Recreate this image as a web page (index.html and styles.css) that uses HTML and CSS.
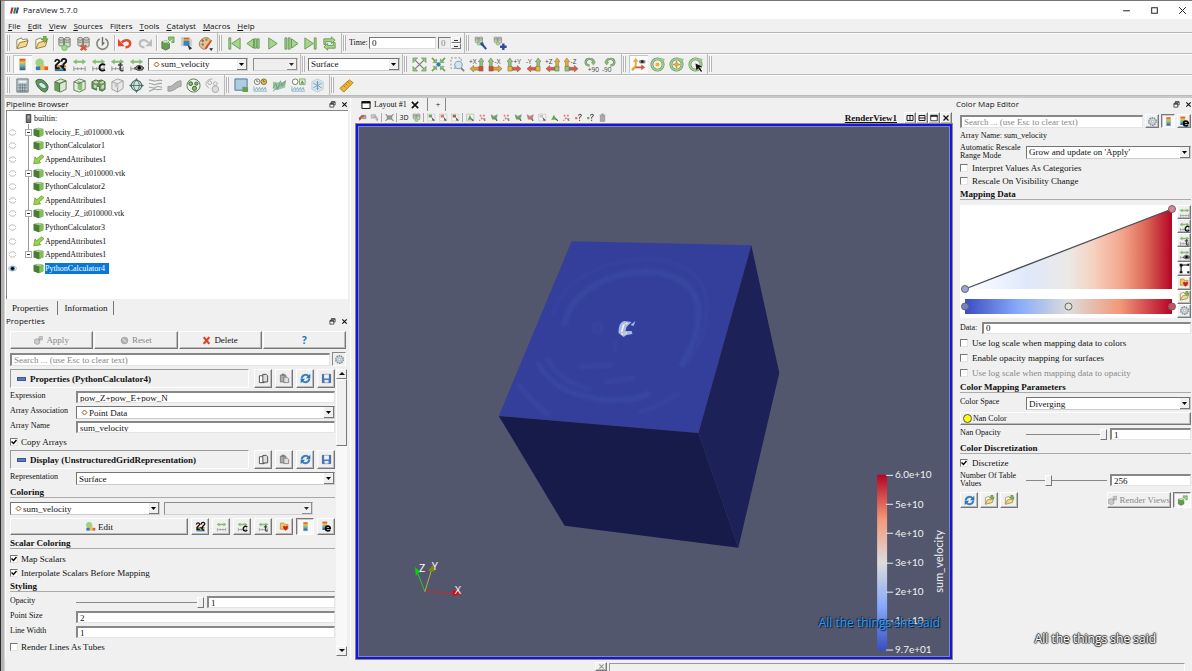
FILE: index.html
```html
<!DOCTYPE html>
<html lang="en">
<head>
<meta charset="utf-8">
<title>ParaView 5.7.0</title>
<link rel="stylesheet" href="styles.css">
</head>
<body>
<svg class="defs" aria-hidden="true">
<defs>
<linearGradient id="jet" x1="0" y1="0" x2="0" y2="1"><stop offset="0" stop-color="#d8381c"/><stop offset=".3" stop-color="#f5c330"/><stop offset=".6" stop-color="#59b8c4"/><stop offset="1" stop-color="#234fa0"/></linearGradient>
<linearGradient id="ramp"><stop offset="0" stop-color="#3b4cc0"/><stop offset=".25" stop-color="#84a9fb"/><stop offset=".5" stop-color="#dddcdc"/><stop offset=".75" stop-color="#f39878"/><stop offset="1" stop-color="#b40426"/></linearGradient>
<linearGradient id="rampV" x1="0" y1="1" x2="0" y2="0"><stop offset="0" stop-color="#3b4cc0"/><stop offset=".25" stop-color="#84a9fb"/><stop offset=".5" stop-color="#dddcdc"/><stop offset=".75" stop-color="#f39878"/><stop offset="1" stop-color="#b40426"/></linearGradient>
<linearGradient id="fade"><stop offset="0" stop-color="#fff"/><stop offset=".3" stop-color="#dfe8fb"/><stop offset=".5" stop-color="#ebe9e6"/><stop offset=".62" stop-color="#f5d2c0"/><stop offset=".76" stop-color="#f3a58b"/><stop offset=".87" stop-color="#dc6b58"/><stop offset="1" stop-color="#b40426"/></linearGradient>
<filter id="soft"><feGaussianBlur stdDeviation="1.6"/></filter>
<filter id="soft1"><feGaussianBlur stdDeviation=".7"/></filter>
</defs>
<symbol id="open" viewBox="0 0 16 16"><path d="M2 13V4l5-2 1 2 5-1v4" fill="#fffbe8" stroke="#8e8157"/><path d="M2 13.500 5 7l9-2-2 6z" fill="#f6d988" stroke="#8e7a43"/></symbol>
<symbol id="openplus" viewBox="0 0 16 16"><use href="#open"/><path d="M10 0h3v3h2l-3.500 4L8 3h2z" fill="#7ab648" stroke="#4f8230" stroke-width=".6"/></symbol>
<symbol id="srv0" viewBox="0 0 16 16"><g fill="#d3d6cc" stroke="#6f7668" stroke-width=".9"><path d="M2 3v7c0 1 5 1 5 0V3z"/><path d="M8 3v8c0 1 6 1 6 0V3z"/><ellipse cx="4.500" cy="3" rx="2.700" ry="1.500"/><ellipse cx="11" cy="3" rx="3" ry="1.500"/><path d="M2 6c1 1 4 1 5 0M8 6c1 1 5 1 6 0" fill="none"/></g></symbol>
<symbol id="srv" viewBox="0 0 16 16"><use href="#srv0"/><circle cx="8" cy="12.500" r="3" fill="#9ddb8f" stroke="#62a655" stroke-width=".7"/></symbol>
<symbol id="srvx" viewBox="0 0 16 16"><use href="#srv0"/><path d="m5 10 6 5m0-5-6 5" stroke="#cf5a40" stroke-width="2.600"/></symbol>
<symbol id="timer" viewBox="0 0 16 16"><path d="M5 3a6 6 0 1 0 6 0" fill="none" stroke="#87887f" stroke-width="1.800"/><path d="M8 1v8l2-2" fill="none" stroke="#6b6c64" stroke-width="1.500"/></symbol>
<symbol id="undo" viewBox="0 0 16 16"><path d="M4 7c3-4 9-3 9 1 0 3-3 4-5 4" fill="none" stroke="#e14b2d" stroke-width="2.600"/><path d="M0 3v8h7z" fill="#e14b2d"/></symbol>
<symbol id="redo" viewBox="0 0 16 16"><path d="M12 7C9 3 3 4 3 8c0 3 3 4 5 4" fill="none" stroke="#bcbcbc" stroke-width="2.400"/><path d="M16 3v8H9z" fill="#bcbcbc"/></symbol>
<symbol id="extract" viewBox="0 0 16 16"><path d="m2 6 5-1 3 2v6l-4 2-4-2z" fill="#669e50" stroke="#3f6d31" stroke-width=".8"/><ellipse cx="6" cy="6" rx="3" ry="1.200" fill="#cfe4bd"/><path d="M9 1h6v6h-2L9 4z" fill="#8ac46e" stroke="#598f43" stroke-width=".7"/><path d="m9 8 4-4" stroke="#fff"/></symbol>
<symbol id="state" viewBox="0 0 16 16"><path d="M2 1h9l3 3v7H2z" fill="#cdd1cc"/><path d="M5 2h6v8H5z" fill="url(#jet)"/><path d="M5 5h6v5H5z" fill="#3d7fc4"/><path d="m9 9 5 4-3 2z" fill="#333"/></symbol>
<symbol id="palette" viewBox="0 0 16 16"><path d="M2 6c3-6 11-5 11-1 0 3-3 2-3 5 0 4-4 5-6 3-3-2-3-5-2-7z" fill="#edc28a" stroke="#9a7144"/><circle cx="5" cy="5" r="1.300" fill="#b75b3a"/><circle cx="9" cy="4" r="1.300" fill="#66a05a"/><circle cx="5" cy="9" r="1.300" fill="#4e85b5"/><path d="m7 13 7-9 1 1-6 9z" fill="#cb4b30"/><path d="M12 13h4l-2 3z" fill="#222"/></symbol>
<symbol id="first" viewBox="0 0 16 16"><path class="vcr" d="M2 2h2v12H2zM14 2v12L5 8z"/></symbol>
<symbol id="prev" viewBox="0 0 16 16"><path class="vcr" d="M12 3h2v10h-2zM9 3h2v10H9zM8 3v10L1 8z"/></symbol>
<symbol id="play" viewBox="0 0 16 16"><path class="vcr" d="M4 2v12l9-6z"/></symbol>
<symbol id="next" viewBox="0 0 16 16"><path class="vcr" d="M1 2h2v12H1zM4.500 2h2v12h-2zM8 3v10l7-5z"/></symbol>
<symbol id="last" viewBox="0 0 16 16"><path class="vcr" d="M12 2h2v12h-2zM2 2v12l9-6z"/></symbol>
<symbol id="loop" viewBox="0 0 16 16"><path class="vcr" d="M2 3h8V1l4 3.500L10 8V6H4v3H2zM14 13H6v2l-4-3.500L6 8v2h6V7h2z"/></symbol>
<symbol id="wrench" viewBox="0 0 16 16"><g transform="scale(.65)"><use href="#srv" width="16" height="16"/></g><path d="m8 8 5 6" stroke="#33499b" stroke-width="2.200"/><circle cx="8.500" cy="8.500" r="1.800" fill="#33499b"/></symbol>
<symbol id="addsrv" viewBox="0 0 16 16"><g transform="scale(.65)"><use href="#srv" width="16" height="16"/></g><path d="M11 8v7M7.500 11.500h7" stroke="#33499b" stroke-width="2.600"/></symbol>
<symbol id="cmap" viewBox="0 0 16 16"><path d="M5 2h6v12H5z" fill="url(#jet)" stroke="#b58a4a" stroke-width=".4"/></symbol>
<symbol id="editcm" viewBox="0 0 16 16"><circle cx="6" cy="6" r="4.500" fill="#9bd382"/><path d="M2 10h5v4H2z" fill="#3977bd"/><path d="M7 8h4v6H7z" fill="#f1bf3a"/><path d="M11 10h4v4h-4z" fill="#d8623c"/></symbol>
<symbol id="cmQ" viewBox="0 0 16 16"><path d="M2 9h12v6H2z" fill="url(#jet)"/><path d="M2 5c1-3 4-3 5 0L3 9v3h4M9 5c0-4 6-4 5 0l-3 3v3M8 9l5 5" fill="none" stroke="#151515" stroke-width="2"/></symbol>
<symbol id="rng" viewBox="0 0 16 16"><path d="M1 5l4-3v2h6V2l4 3-4 3V6H5v2z" fill="#85bd73"/><path d="M2 10v5m12-5v5M2 12.500h12M6 11v3m4-3v3" fill="none" stroke="#909090"/></symbol>
<symbol id="rngc" viewBox="0 0 16 16"><use href="#rng"/><path d="M15 8.500c-3-2-6 0-6 3s3 4 6 2" fill="none" stroke="#111" stroke-width="2"/></symbol>
<symbol id="rngt" viewBox="0 0 16 16"><use href="#rng"/><path d="M11 6v7c0 2 2 2 3 1M8.500 8.500h5" fill="none" stroke="#444" stroke-width="1.800"/></symbol>
<symbol id="rngeye" viewBox="0 0 16 16"><use href="#rng"/><path d="M6 12c3-4 7-4 10 0-3 3-7 3-10 0z" fill="#888" stroke="#333"/><circle cx="11" cy="11.500" r="1.800" fill="#000"/></symbol>
<symbol id="outarr" viewBox="0 0 16 16"><path d="m3 3 10 10M13 3 3 13" stroke="#777b72" stroke-width="1.200"/><path d="M1 1h5L1 6zM15 1v5l-5-5zM1 15v-5l5 5zM15 15h-5l5-5z" fill="#94c680" stroke="#5e8751" stroke-width=".6"/></symbol>
<symbol id="inarr" viewBox="0 0 16 16"><path d="m1 1 4 4M15 1l-4 4M1 15l4-4M15 15l-4-4" stroke="#71a860" stroke-width="1.800"/><path d="M6 2v4H2zM10 2v4h4zM6 14v-4H2zM10 14v-4h4z" fill="#88bd74" stroke="#5e8751" stroke-width=".5"/><circle cx="8" cy="8" r="2.300" fill="#2184ad"/></symbol>
<symbol id="zbox" viewBox="0 0 16 16"><path d="M1 1h11v11H1z" fill="none" stroke="#888" stroke-dasharray="2 2"/><circle cx="9" cy="8.500" r="4" fill="#cfe6f4" stroke="#8ea3b0" stroke-width="1.200"/><path d="m12 12 3 3" stroke="#7e878c" stroke-width="2"/></symbol>
<symbol id="axr" viewBox="0 0 16 16"><g class="edge"><path d="M3 1l3 4H4.500v7h-3V5H0z" fill="var(--v)"/><path d="M5 11h6V9l4 3.500-4 3.500v-2H5z" fill="var(--h)"/><path d="M1 10h4.500v5H1z" fill="var(--c)"/></g></symbol>
<symbol id="axl" viewBox="0 0 16 16"><g class="edge"><path d="M13 1l3 4h-1.500v7h-3V5H10z" fill="var(--v)"/><path d="M11 11H5V9l-4 3.500L5 16v-2h6z" fill="var(--h)"/><path d="M10.500 10H15v5h-4.500z" fill="var(--c)"/></g></symbol>
<symbol id="rotp" viewBox="0 0 16 16"><path d="M7 9C1 9 2 2 7 2c4 0 5 3 4 5" fill="none" stroke="#708e64" stroke-width="2.600"/><path d="M7 9C1 9 2 2 7 2c4 0 5 3 4 5" fill="none" stroke="#a3cf8f"/><path d="M8 5h6l-3 4z" fill="#87b775"/></symbol>
<symbol id="rotm" viewBox="0 0 16 16"><path d="M9 9c6 0 5-7 0-7-4 0-5 3-4 5" fill="none" stroke="#708e64" stroke-width="2.600"/><path d="M9 9c6 0 5-7 0-7-4 0-5 3-4 5" fill="none" stroke="#a3cf8f"/><path d="M8 5H2l3 4z" fill="#87b775"/></symbol>
<symbol id="axshow" viewBox="0 0 16 16"><path d="M5 1l3 4H6v6l-4 4-2-2 4-4V5H2z" fill="#d8af35"/><path d="M5 10h6V8l4 3-4 3v-2H5z" fill="#d0563e"/><ellipse cx="12" cy="5" rx="3.500" ry="2" fill="#888"/><circle cx="12" cy="5" r="1.500" fill="#222"/></symbol>
<symbol id="ring" viewBox="0 0 16 16"><circle cx="8" cy="8" r="6" fill="none" stroke="#678c58" stroke-width="3"/><circle cx="8" cy="8" r="6" fill="none" stroke="#a3cf8f" stroke-width="1.800"/><path d="m11 1 5 1-3 5z" fill="#9ac785"/></symbol>
<symbol id="ring1" viewBox="0 0 16 16"><use href="#ring"/><circle cx="8" cy="8" r="2.200" fill="#e5b72b"/></symbol>
<symbol id="ring2" viewBox="0 0 16 16"><use href="#ring"/><path d="m8 4 1 3 3 1-3 1-1 3-1-3-3-1 3-1z" fill="#e5b72b" stroke="#977a27" stroke-width=".5"/></symbol>
<symbol id="ring3" viewBox="0 0 16 16"><use href="#ring"/><path d="m8 7 7 3-3 1 3 4-1 1-3-4-2 2z" fill="#111"/></symbol>
<symbol id="calc" viewBox="0 0 16 16"><path d="M2 1h12v14H2z" fill="#bfcbd0" stroke="#66757b"/><path d="M4 3h8v2H4z" fill="#eef3f3"/><path d="M3 7.500h10M3 10.500h10M3 13.500h10M5.500 6v9M8 6v9M10.500 6v9" stroke="#6d7c83" stroke-width=".9"/></symbol>
<symbol id="contour" viewBox="0 0 16 16"><path d="M2 3c4-4 11 0 13 6 0 4-2 6-4 6-5-2-9-7-9-12z" fill="#659758" stroke="#3a6233"/><ellipse cx="9" cy="8" rx="4.500" ry="2.500" transform="rotate(35 9 8)" fill="#d6e9e2" stroke="#407a74"/></symbol>
<symbol id="cube" viewBox="0 0 16 16"><path d="m1 3 7-2 7 2v9l-7 3-7-3z" fill="#5c8f42"/><path d="m1 3 7-2 7 2-6 2z" fill="#a7cf8b"/><path d="m9 5 6-2v9l-6 3z" fill="#7fc05c"/><path d="m1 3 8 2v10l-8-3z" fill="#4c7a3a"/></symbol>
<symbol id="clip" viewBox="0 0 16 16"><path d="m2 4 6-3 6 2v9l-6 3-6-2z" fill="#dbe8d5" stroke="#5d8153"/><path d="m2 4 5 2v9l-5-2z" fill="#6b9c5a"/><path d="m2 4 5 2 7-3M7 6v9" fill="none" stroke="#55784b" stroke-width="1.200"/></symbol>
<symbol id="slice" viewBox="0 0 16 16"><path d="m2 4 6-3 6 2v9l-6 3-6-2z" fill="#e5eee1" stroke="#5d8153"/><path d="m6 3 5 2v9l-5-2z" fill="#8dbb7b"/><path d="m2 4 5 2 7-3" fill="none" stroke="#55784b"/></symbol>
<symbol id="thresh" viewBox="0 0 16 16"><path d="m1 4 4-2 3 1 3-1 4 2v8l-3 2-3-1V9H6v4l-5-2z" fill="#6a9459" stroke="#4f7046"/><path d="m2 4 4-1 2 2-3 1zM9 5l4-2 1 2-3 1zM3 7l3 1v3l-3-1zM11 8l3-1v4l-3 1z" fill="#c6ddb8"/></symbol>
<symbol id="subset" viewBox="0 0 16 16"><path d="m2 4 6-3 6 2v8l-6 4-6-3zM2 4l6 2 6-3M8 6v9" fill="#e7e7e7" stroke="#a0a0a0"/><path d="m5 6 4 1v4L5 9z" fill="#c5c5c5"/></symbol>
<symbol id="glyph" viewBox="0 0 16 16"><circle cx="8" cy="8" r="5.500" fill="#d3e3db" stroke="#51756c" stroke-width="1.200"/><path d="M8 2c-4 4-4 8 0 12 4-4 4-8 0-12M2 8h12" fill="none" stroke="#51756c"/><path d="M8 0l2 3H6zM8 16l2-3H6zM0 8l3-2v4zM16 8l-3-2v4z" fill="#42706a"/></symbol>
<symbol id="stream" viewBox="0 0 16 16"><path d="M1 2c4 0 4 2 8 1s4-1 6 0M1 6c4-1 4 2 7 1s4-2 7-1M1 10c4-1 4 2 7 0s4-1 7 0M1 14c3 0 4-3 7-2s4 0 7 0" fill="none" stroke="#a1a6a2" stroke-width="1.200"/></symbol>
<symbol id="warp" viewBox="0 0 16 16"><path d="M1 9c6 1 7-6 14-6v6c-5 0-7 6-14 5z" fill="#b4b4b4" stroke="#9b9b9b"/></symbol>
<symbol id="group" viewBox="0 0 16 16"><circle cx="8" cy="8" r="7" fill="#eaf3e6" stroke="#55784b"/><circle cx="5" cy="6" r="2" fill="#89b977" stroke="#3e6135"/><circle cx="11" cy="6" r="1.700" fill="#89b977" stroke="#3e6135"/><circle cx="9" cy="11" r="2.200" fill="#89b977" stroke="#3e6135"/></symbol>
<symbol id="level" viewBox="0 0 16 16"><path d="M8 1C3 1 1 4 1 7l3 4" fill="none" stroke="#aaa"/><circle cx="5" cy="5" r="2" fill="#eee" stroke="#aaa"/><circle cx="11" cy="6" r="2" fill="#eee" stroke="#aaa"/><circle cx="11" cy="12" r="3.500" fill="#ddd" stroke="#aaa"/></symbol>
<symbol id="sel" viewBox="0 0 16 16"><path d="M1 1h13v12H1z" fill="#aecde0" stroke="#3f789e"/><path d="m9 9 6 1v5H9z" fill="#61a44c"/></symbol>
<symbol id="plot" viewBox="0 0 16 16"><circle cx="4.500" cy="4" r="3" fill="#fff" stroke="#6c7a5c"/><circle cx="11.500" cy="4" r="3" fill="#e7c34b" stroke="#7c6a3a"/><path d="M4 2v2h2M11 2v2h2" fill="none" stroke="#5a5a4a" stroke-width=".8"/><path d="M1 9v5h14M2 13l2-3 1 3 2-3 1 3 2-3 1 3 2-3 1 3" fill="none" stroke="#7ba8c4" stroke-width=".9"/></symbol>
<symbol id="plotline" viewBox="0 0 16 16"><path d="m1 4 9 1 5-3-1 8-9 3-4-2z" fill="#9fc39a"/><path d="m1 11 3-5 2 6 3-9 2 6 3-4M1 14 15 3" fill="none" stroke="#6a9f9a"/></symbol>
<symbol id="plot3" viewBox="0 0 16 16"><circle cx="4.500" cy="4" r="3" fill="#fff" stroke="#6c7a5c"/><path d="M9 1h6v6H9z" fill="#dcefd5" stroke="#85a97a"/><path d="m10 6 2-4 2 4z" fill="#67a255"/><path d="M1 9v5h14M2 13l2-3 1 3 2-3 1 3 2-3 1 3 2-3 1 3" fill="none" stroke="#7ba8c4" stroke-width=".9"/></symbol>
<symbol id="snow" viewBox="0 0 16 16"><path d="m2 4 6-3 6 3v8l-6 3-6-3z" fill="#dce7ee" stroke="#c2ccd3"/><path d="M8 3v10M3.500 5.500l9 5M12.500 5.500l-9 5" fill="none" stroke="#6ba0be"/><path d="M6 4l2 2 2-2M6 12l2-2 2 2" fill="none" stroke="#6ba0be" stroke-width=".7"/></symbol>
<symbol id="ruler" viewBox="0 0 16 16"><path d="m1 11 10-9 4 3L5 15z" fill="#eeb72d" stroke="#a7791f"/><path d="m5 8 2 2m0-4 2 2m0-4 2 2" stroke="#8d651c" stroke-width=".8"/></symbol>
<symbol id="gear" viewBox="0 0 16 16"><circle cx="8" cy="8" r="5.500" fill="#e6ecef" stroke="#7f9099" stroke-width="2" stroke-dasharray="2.300 1.100"/><circle cx="8" cy="8" r="4.200" fill="none" stroke="#8a99a1" stroke-width=".9"/><circle cx="8" cy="8" r="1.800" fill="#fff" stroke="#7f9099"/></symbol>
<symbol id="copy" viewBox="0 0 16 16"><path d="M2 4h5l2 2v8H2z" fill="#fff" stroke="#444" stroke-width="1.300"/><path d="M7 2h5l2 2v9H7z" fill="#ddd" stroke="#444" stroke-width="1.300"/></symbol>
<symbol id="paste" viewBox="0 0 16 16"><path d="M2 3h8v10H2z" fill="#aaa" stroke="#666"/><path d="M4 1h4v3H4z" fill="#777"/><path d="M7 6h5l2 2v6H7z" fill="#ddd" stroke="#666"/></symbol>
<symbol id="refresh" viewBox="0 0 16 16"><path d="M2.500 8C3 2 10 1 12.500 5M13.500 8C13 14 6 15 3.500 11" fill="none" stroke="#3d82c0" stroke-width="3"/><path d="M15 1v6.500H8.500zM1 15V8.500h6.500z" fill="#2d72b3"/></symbol>
<symbol id="save" viewBox="0 0 16 16"><path d="M2 2h12v12H2z" fill="#4777b4" stroke="#2f5487"/><path d="M4.500 2h7v6h-7z" fill="#edf3f9"/><path d="M5 10h6v4H5z" fill="#dfe6ee"/></symbol>
<symbol id="heart" viewBox="0 0 16 16"><path d="M2 3h5l1 2h5v7H2z" fill="#f2c85e" stroke="#af8b36"/><path d="M9.500 14C3 9 7 5 9.500 8c2.500-3 6.500 1 0 6z" fill="#cf2024"/></symbol>
<symbol id="cme" viewBox="0 0 16 16"><path d="M2 1h7v12H2z" fill="url(#jet)"/><path d="M6.500 11h7c0-5-7-5-7 0 0 4 4 4 7 2.500" fill="none" stroke="#000" stroke-width="2.200"/></symbol>
<symbol id="apply" viewBox="0 0 16 16"><path d="m1 6 5-1 4 1v7l-4 2-5-2z" fill="#ccc" stroke="#8d8d8d"/><path d="M9 1h6v6H9z" fill="#ccc" stroke="#999"/><path d="m8 8 4-4" stroke="#777"/></symbol>
<symbol id="reset" viewBox="0 0 16 16"><circle cx="8" cy="8" r="6" fill="#b3b3b3" stroke="#929292"/><path d="m5 5 6 6" stroke="#ddd" stroke-width="2"/></symbol>
<symbol id="del" viewBox="0 0 16 16"><path d="m3 2 10 12M13 2 3 14" stroke="#dd432b" stroke-width="4"/></symbol>
<symbol id="arrow" viewBox="0 0 16 16"><path d="m13 1 3 3-7 6 2 3-10 1L3 4l2 3z" fill="#9bd34a" stroke="#5c9026"/></symbol>
<symbol id="eyeoff" viewBox="0 0 16 16"><path d="M2 7c2-5 10-5 12 0M2 9c2 5 10 5 12 0" fill="none" stroke="#aaa" stroke-width="1.500"/></symbol>
<symbol id="eyeon" viewBox="0 0 16 16"><path d="M0 8c3-6 13-6 16 0-3 6-13 6-16 0z" fill="#d6e7ef" stroke="#999"/><circle cx="8" cy="8" r="4" fill="#1f6f9c"/><circle cx="8" cy="8" r="2.400" fill="#000"/></symbol>
<symbol id="server" viewBox="0 0 16 16"><path d="M4 1h8v14H4z" fill="#777" stroke="#222" stroke-width="1.400"/><path d="M6 4h4M6 7h4" stroke="#ddd" stroke-width="1.300"/></symbol>
<symbol id="curve" viewBox="0 0 16 16"><path d="M1 1h14v14H1z" fill="#fff"/><path d="M3 14V6c0-2 1-3 3-3h8" fill="none" stroke="#000" stroke-width="1.600"/><path d="M1 1h4v4H1zM1 12h4v3H1zM12 1h3v3h-3zM12 12h3v3h-3z" fill="#111"/></symbol>
<symbol id="dock" viewBox="0 0 16 16"><path d="M5 5V2h9v7h-3M2 6h9v8H2z" fill="none" stroke="#222" stroke-width="1.600"/><path d="M5 2.500h9M2 7h9" stroke="#222" stroke-width="2.400"/></symbol>
<symbol id="x" viewBox="0 0 16 16"><path d="m3 3 10 10M13 3 3 13" stroke="#111" stroke-width="2.600"/></symbol>
<symbol id="min" viewBox="0 0 16 16"><path d="M2 8.500h12" stroke="#222" stroke-width="1.800"/></symbol>
<symbol id="max" viewBox="0 0 16 16"><path d="M3 3h10v10H3z" fill="none" stroke="#222" stroke-width="1.800"/></symbol>
<symbol id="xthin" viewBox="0 0 16 16"><path d="m2 2 12 12M14 2 2 14" stroke="#222" stroke-width="1.700"/></symbol>
<symbol id="splitv" viewBox="0 0 16 16"><path d="M2 3h12v10H2zM8 3v10" fill="none" stroke="#111" stroke-width="1.900"/></symbol>
<symbol id="splith" viewBox="0 0 16 16"><path d="M2 3h12v10H2zM2 8h12" fill="none" stroke="#111" stroke-width="1.900"/></symbol>
<symbol id="win" viewBox="0 0 16 16"><path d="M1.500 2.500h13v11h-13z" fill="#fff" stroke="#111" stroke-width="1.600"/><path d="M1 4h14" stroke="#111" stroke-width="3"/></symbol>
<symbol id="camundo" viewBox="0 0 16 16"><path d="M6 4h8v6H6z" fill="#b3a79f" stroke="#777"/><path d="M3 12c0-5 3-7 8-6" fill="none" stroke="#c94b38" stroke-width="2.400"/><path d="M1 8h6l-4 6z" fill="#a5584b"/></symbol>
<symbol id="camredo" viewBox="0 0 16 16"><path d="M2 3h8v6H2z" fill="#ccc" stroke="#999"/><path d="M6 7c5-2 7 1 7 5" fill="none" stroke="#aaa" stroke-width="2.200"/><path d="M9 10h6l-2 5z" fill="#aaa"/></symbol>
<symbol id="cam" viewBox="0 0 16 16"><path d="M4 5h8v6H4z" fill="#91a889" stroke="#666"/><path d="M1 2l3 3m11-3-3 3M1 14l3-3m11 3-3-3" stroke="#888" stroke-width="1.800"/></symbol>
<symbol id="ssel" viewBox="0 0 16 16"><path d="M1 2h13v12H1z" fill="#f3f3f3" stroke="#aaa" stroke-dasharray="2 1"/><path d="M3 3h6v5H3z" fill="var(--c)"/><path d="m8 7 6 6-4 1z" fill="#555"/></symbol>
<symbol id="tsel" viewBox="0 0 16 16"><path d="M1 2h13v12H1z" fill="none" stroke="#aaa"/><path d="m7 3 4 9H3z" fill="var(--c)"/><path d="m9 9 5 4-3 1z" fill="#555"/></symbol>
<symbol id="psel" viewBox="0 0 16 16"><path d="M3 3h3v3H3zM9 3h3v3H9zM5 8h3v3H5zM11 9h2v2h-2zM2 12h2v2H2z" fill="var(--c)"/><path d="m8 8 6 5-3 1z" fill="#777"/></symbol>
<symbol id="poly" viewBox="0 0 16 16"><path d="m2 3 5 3 6-3-2 8H4z" fill="var(--c)" stroke="#888"/><path d="m9 9 5 4-3 1z" fill="#555"/></symbol>
<symbol id="tri" viewBox="0 0 16 16"><path d="m7 3 5 9H2z" fill="var(--c)"/><path d="m10 10 4 4" stroke="#555" stroke-width="2"/></symbol>
<symbol id="ask" viewBox="0 0 16 16"><path d="M8 5c0-4 6-3 5 0l-3 3v2M10 12v2" fill="none" stroke="#555" stroke-width="1.800"/><path d="M2 7h4v4H2z" fill="var(--c)"/></symbol>
<symbol id="trash" viewBox="0 0 16 16"><path d="M4 5h8v10H4z" fill="#aaa" stroke="#888"/><path d="M3 3h10v2H3zM6 1h4v2H6z" fill="#999"/></symbol>
</svg>

<div class="window">
<header class="titlebar">
  <svg class="logo" viewBox="0 0 18 14"><path d="M3 1h4L4 13H0z" fill="#c8202f"/><path d="M9 1h4l-3 12H6z" fill="#258a42"/><path d="M14 1h4l-3 12h-4z" fill="#234a9b"/></svg>
  <h1>ParaView 5.7.0</h1>
  <div class="winctl"><button aria-label="Minimize"><svg><use href="#min"/></svg></button><button aria-label="Maximize"><svg><use href="#max"/></svg></button><button aria-label="Close"><svg><use href="#xthin"/></svg></button></div>
</header>
<nav class="menubar">
  <button><u>F</u>ile</button><button><u>E</u>dit</button><button><u>V</u>iew</button><button><u>S</u>ources</button><button>Fi<u>l</u>ters</button><button><u>T</u>ools</button><button><u>C</u>atalyst</button><button><u>M</u>acros</button><button><u>H</u>elp</button>
</nav>

<div class="toolbar">
  <div class="group">
    <button aria-label="Open"><svg><use href="#open"/></svg></button><button aria-label="Load state"><svg><use href="#openplus"/></svg></button><i class="sep"></i>
    <button aria-label="Connect"><svg><use href="#srv"/></svg></button><button aria-label="Disconnect"><svg><use href="#srvx"/></svg></button><button aria-label="Timer"><svg><use href="#timer"/></svg></button><i class="sep"></i>
    <button aria-label="Undo"><svg><use href="#undo"/></svg></button><button aria-label="Redo"><svg><use href="#redo"/></svg></button><i class="sep"></i>
    <button aria-label="Auto apply"><svg><use href="#extract"/></svg></button><button aria-label="Find data"><svg><use href="#state"/></svg></button><button aria-label="Palette"><svg><use href="#palette"/></svg></button>
  </div>
  <div class="group">
    <button aria-label="First"><svg><use href="#first"/></svg></button><button aria-label="Previous"><svg><use href="#prev"/></svg></button><button aria-label="Play"><svg><use href="#play"/></svg></button><button aria-label="Next"><svg><use href="#next"/></svg></button><button aria-label="Last"><svg><use href="#last"/></svg></button><button aria-label="Loop"><svg><use href="#loop"/></svg></button>
  </div>
  <div class="group">
    <label class="timelabel" for="time">Time:</label><input id="time" class="time" value="0"><input class="spin" type="text" value="0" aria-label="Time step" disabled><span class="spinner"><i></i><i></i></span>
  </div>
  <div class="group">
    <button aria-label="Server tools"><svg><use href="#wrench"/></svg></button><button aria-label="Add server"><svg><use href="#addsrv"/></svg></button>
  </div>
</div>
<div class="toolbar">
  <div class="group">
    <button class="on" aria-label="Color legend"><svg><use href="#cmap"/></svg></button><button aria-label="Edit color map"><svg><use href="#editcm"/></svg></button><button aria-label="Separate color map"><svg><use href="#cmQ"/></svg></button><button aria-label="Rescale to data"><svg><use href="#rng"/></svg></button><button aria-label="Rescale custom"><svg><use href="#rngc"/></svg></button><button aria-label="Rescale temporal"><svg><use href="#rngt"/></svg></button><button aria-label="Rescale visible"><svg><use href="#rngeye"/></svg></button>
    <select class="combo array w-array" aria-label="Array"><option>sum_velocity</option></select><select class="combo w-comp" aria-label="Component" disabled><option></option></select>
  </div>
  <div class="group">
    <select class="combo w-repr" aria-label="Representation"><option>Surface</option></select>
  </div>
  <div class="group">
    <button aria-label="Reset camera"><svg><use href="#outarr"/></svg></button><button aria-label="Zoom to data"><svg><use href="#inarr"/></svg></button><button aria-label="Zoom to box"><svg><use href="#zbox"/></svg></button>
    <button class="xp" aria-label="Plus X"><svg viewBox="0 0 16 16"><use href="#axl"/><text x="0" y="7" class="mini">+X</text></svg></button>
    <button class="xm" aria-label="Minus X"><svg viewBox="0 0 16 16"><use href="#axr"/><text x="7" y="7" class="mini">-X</text></svg></button>
    <button class="yp" aria-label="Plus Y"><svg viewBox="0 0 16 16"><use href="#axr"/><text x="7" y="7" class="mini">+Y</text></svg></button>
    <button class="ym" aria-label="Minus Y"><svg viewBox="0 0 16 16"><use href="#axl"/><text x="0" y="7" class="mini">-Y</text></svg></button>
    <button class="zp" aria-label="Plus Z"><svg viewBox="0 0 16 16"><use href="#axl"/><text x="0" y="7" class="mini">+Z</text></svg></button>
    <button class="zm" aria-label="Minus Z"><svg viewBox="0 0 16 16"><use href="#axr"/><text x="7" y="7" class="mini">-Z</text></svg></button>
    <button aria-label="Rotate clockwise"><svg viewBox="0 0 16 16"><use href="#rotp"/><text x="5" y="16" class="mini">+90</text></svg></button><button aria-label="Rotate counterclockwise"><svg viewBox="0 0 16 16"><use href="#rotm"/><text x="0" y="16" class="mini">-90</text></svg></button>
  </div>
  <div class="group">
    <button class="on" aria-label="Show axes"><svg><use href="#axshow"/></svg></button><button aria-label="Show center"><svg><use href="#ring1"/></svg></button><button aria-label="Reset center"><svg><use href="#ring2"/></svg></button><button aria-label="Pick center"><svg><use href="#ring3"/></svg></button>
  </div>
  <div class="group"></div>
</div>
<div class="toolbar">
  <div class="group">
    <button aria-label="Calculator"><svg><use href="#calc"/></svg></button><button aria-label="Contour"><svg><use href="#contour"/></svg></button><button aria-label="Clip"><svg><use href="#clip"/></svg></button><button aria-label="Slice"><svg><use href="#slice"/></svg></button><button aria-label="Threshold"><svg><use href="#thresh"/></svg></button><button aria-label="Extract subset"><svg><use href="#subset"/></svg></button><button aria-label="Glyph"><svg><use href="#glyph"/></svg></button><button aria-label="Stream tracer"><svg><use href="#stream"/></svg></button><button aria-label="Warp"><svg><use href="#warp"/></svg></button><button aria-label="Group datasets"><svg><use href="#group"/></svg></button><button aria-label="Extract level"><svg><use href="#level"/></svg></button>
  </div>
  <div class="group">
    <button aria-label="Extract selection"><svg><use href="#sel"/></svg></button><button aria-label="Plot over time"><svg><use href="#plot"/></svg></button><button aria-label="Plot over line"><svg><use href="#plotline"/></svg></button><button aria-label="Plot selection"><svg><use href="#plot3"/></svg></button><button aria-label="Probe"><svg><use href="#snow"/></svg></button>
  </div>
  <div class="group">
    <button aria-label="Ruler"><svg><use href="#ruler"/></svg></button>
  </div>
</div>

<main class="work">
<aside class="left">
  <section class="browser">
    <h2 class="docktitle">Pipeline Browser<span><svg><use href="#dock"/></svg><svg><use href="#x"/></svg></span></h2>
    <ul class="tree">
      <li class="root"><svg class="ico"><use href="#server"/></svg><span>builtin:</span></li>
      <li class="node"><svg class="eye"><use href="#eyeoff"/></svg><b></b><svg class="ico"><use href="#cube"/></svg><span>velocity_E_it010000.vtk</span></li>
      <li><svg class="eye"><use href="#eyeoff"/></svg><svg class="ico"><use href="#cube"/></svg><span>PythonCalculator1</span></li>
      <li><svg class="eye"><use href="#eyeoff"/></svg><svg class="ico"><use href="#arrow"/></svg><span>AppendAttributes1</span></li>
      <li class="node"><svg class="eye"><use href="#eyeoff"/></svg><b></b><svg class="ico"><use href="#cube"/></svg><span>velocity_N_it010000.vtk</span></li>
      <li><svg class="eye"><use href="#eyeoff"/></svg><svg class="ico"><use href="#cube"/></svg><span>PythonCalculator2</span></li>
      <li><svg class="eye"><use href="#eyeoff"/></svg><svg class="ico"><use href="#arrow"/></svg><span>AppendAttributes1</span></li>
      <li class="node"><svg class="eye"><use href="#eyeoff"/></svg><b></b><svg class="ico"><use href="#cube"/></svg><span>velocity_Z_it010000.vtk</span></li>
      <li><svg class="eye"><use href="#eyeoff"/></svg><svg class="ico"><use href="#cube"/></svg><span>PythonCalculator3</span></li>
      <li><svg class="eye"><use href="#eyeoff"/></svg><svg class="ico"><use href="#arrow"/></svg><span>AppendAttributes1</span></li>
      <li class="node"><svg class="eye"><use href="#eyeoff"/></svg><b></b><svg class="ico"><use href="#cube"/></svg><span>AppendAttributes1</span></li>
      <li class="sel"><svg class="eye"><use href="#eyeon"/></svg><svg class="ico"><use href="#cube"/></svg><span>PythonCalculator4</span></li>
    </ul>
  </section>
  <div class="tabs"><button>Properties</button><button>Information</button></div>
  <h2 class="docktitle">Properties<span><svg><use href="#dock"/></svg><svg><use href="#x"/></svg></span></h2>
  <div class="actions">
    <button class="push" disabled><svg><use href="#apply"/></svg>Apply</button><button class="push" disabled><svg><use href="#reset"/></svg>Reset</button><button class="push"><svg><use href="#del"/></svg>Delete</button><button class="push help" aria-label="Help">?</button>
  </div>
  <div class="searchrow"><input class="field" placeholder="Search ... (use Esc to clear text)" aria-label="Search properties"><button class="sq on" aria-label="Advanced"><svg><use href="#gear"/></svg></button></div>
  <div class="scroll">
    <div class="form">
      <div class="hdr"><h3><i></i>Properties (PythonCalculator4)</h3><button class="push" aria-label="Copy"><svg><use href="#copy"/></svg></button><button class="push" aria-label="Paste"><svg><use href="#paste"/></svg></button><button class="push" aria-label="Restore"><svg><use href="#refresh"/></svg></button><button class="push" aria-label="Save"><svg><use href="#save"/></svg></button></div>
      <div class="row"><label for="expr">Expression</label><input id="expr" class="field" value="pow_Z+pow_E+pow_N"></div>
      <div class="row"><label for="assoc">Array Association</label><select id="assoc" class="combo array"><option>Point Data</option></select></div>
      <div class="row"><label for="aname">Array Name</label><input id="aname" class="field" value="sum_velocity"></div>
      <label class="check"><input type="checkbox" checked>Copy Arrays</label>
      <div class="hdr"><h3><i></i>Display (UnstructuredGridRepresentation)</h3><button class="push" aria-label="Copy"><svg><use href="#copy"/></svg></button><button class="push" aria-label="Paste"><svg><use href="#paste"/></svg></button><button class="push" aria-label="Restore"><svg><use href="#refresh"/></svg></button><button class="push" aria-label="Save"><svg><use href="#save"/></svg></button></div>
      <div class="row"><label for="repr">Representation</label><select id="repr" class="combo"><option>Surface</option></select></div>
      <h4>Coloring</h4>
      <div class="pair"><select class="combo array" aria-label="Color array"><option>sum_velocity</option></select><select class="combo" aria-label="Color component" disabled><option></option></select></div>
      <div class="editrow"><button class="push edit"><svg><use href="#editcm"/></svg>Edit</button><button class="push" aria-label="Separate"><svg><use href="#cmQ"/></svg></button><button class="push" aria-label="Rescale"><svg><use href="#rng"/></svg></button><button class="push" aria-label="Rescale custom"><svg><use href="#rngc"/></svg></button><button class="push" aria-label="Rescale temporal"><svg><use href="#rngt"/></svg></button><button class="push" aria-label="Presets"><svg><use href="#heart"/></svg></button><button class="push down" aria-label="Legend"><svg><use href="#cmap"/></svg></button><button class="push" aria-label="Edit legend"><svg><use href="#cme"/></svg></button></div>
      <h4>Scalar Coloring</h4>
      <label class="check"><input type="checkbox" checked>Map Scalars</label>
      <label class="check"><input type="checkbox" checked>Interpolate Scalars Before Mapping</label>
      <h4>Styling</h4>
      <div class="row"><label for="opac">Opacity</label><span class="slide"><input id="opac" type="range" value="100"><input class="field" value="1" aria-label="Opacity value"></span></div>
      <div class="row"><label for="psize">Point Size</label><input id="psize" class="field" value="2"></div>
      <div class="row"><label for="lwidth">Line Width</label><input id="lwidth" class="field" value="1"></div>
      <label class="check"><input type="checkbox">Render Lines As Tubes</label>
      <label class="check"><input type="checkbox">Render Points As Spheres</label>
    </div>
    <div class="bar"><i class="up"></i><i class="thumb"></i><i class="dn"></i></div>
  </div>
</aside>

<section class="center">
  <div class="layouttabs"><button><svg><use href="#win"/></svg>Layout #1<svg><use href="#x"/></svg></button><button class="plus">+</button></div>
  <div class="viewbar">
    <button aria-label="Camera undo"><svg><use href="#camundo"/></svg></button><button aria-label="Camera redo"><svg><use href="#camredo"/></svg></button><i></i>
    <button aria-label="Capture"><svg><use href="#cam"/></svg></button><i></i>
    <button class="d3">3D</button><button aria-label="Adjust camera"><svg><use href="#srv"/></svg></button><i></i>
    <button class="g" aria-label="Add selection"><svg><use href="#ssel"/></svg></button><button class="r" aria-label="Subtract selection"><svg><use href="#ssel"/></svg></button><button class="m" aria-label="Toggle selection"><svg><use href="#ssel"/></svg></button><i></i>
    <button class="g" aria-label="Select cells"><svg><use href="#tsel"/></svg></button><button class="r" aria-label="Select points"><svg><use href="#psel"/></svg></button><button class="g" aria-label="Select cells through"><svg><use href="#poly"/></svg></button><button class="r" aria-label="Select points through"><svg><use href="#psel"/></svg></button><button class="g" aria-label="Polygon cells"><svg><use href="#poly"/></svg></button><button class="r" aria-label="Polygon points"><svg><use href="#poly"/></svg></button><button class="n" aria-label="Select block"><svg><use href="#ssel"/></svg></button><button class="g" aria-label="Interactive cells"><svg><use href="#tri"/></svg></button><button class="r" aria-label="Interactive points"><svg><use href="#psel"/></svg></button><button class="r" aria-label="Hover points"><svg><use href="#ask"/></svg></button><button class="g" aria-label="Hover cells"><svg><use href="#ask"/></svg></button><button aria-label="Clear"><svg><use href="#trash"/></svg></button>
    <strong>RenderView1</strong>
    <div class="viewctl"><button class="push" aria-label="Split horizontal"><svg><use href="#splitv"/></svg></button><button class="push" aria-label="Split vertical"><svg><use href="#splith"/></svg></button><button class="push" aria-label="Maximize view"><svg><use href="#win"/></svg></button><button class="push" aria-label="Close view"><svg><use href="#x"/></svg></button></div>
  </div>
  <div class="view">
    <svg viewBox="357 126 593 531" preserveAspectRatio="xMidYMid meet">
      <path d="m571 241 180 4-53 188-200-17z" fill="#343f9c"/>
      <clipPath id="top"><path d="m571 241 180 4-53 188-200-17z"/></clipPath>
      <g clip-path="url(#top)" fill="none" stroke="#4058a8" filter="url(#soft)">
        <path d="M563 326c8-35 45-55 85-54 35 1 52 20 50 46-1 18-8 34-18 48" stroke-width="6" opacity=".3"/>
        <path d="M552 315c10-35 50-57 100-56 40 2 58 25 54 58-3 22-12 38-24 50" stroke-width="2" opacity=".2"/>
        <path d="M537 362c10 20 30 36 75 38 20 0 30-3 37-7" stroke-width="5" opacity=".35"/>
        <path d="M546 358c10 18 24 27 45 32M578 367l34-2M604 382l30-4M517 383c10 15 20 22 32 33" stroke-width="5" opacity=".25"/>
        <path d="M638 412c17-4 30-11 42-20M615 341v12" stroke-width="3" opacity=".25"/>
        <ellipse cx="597" cy="328" rx="4" ry="5" stroke-width="3" opacity=".2"/>
      </g>
      <path d="M618 333c0-6 1-11 6-12l7 1-5 5-1 4 6 0 1 3-6 1-3 2z" fill="#9dbdec" filter="url(#soft1)"/><path d="m630 325 5-4-2 5z" fill="#9dbdec"/>
      <path d="m621 332 2-7 4-2M621 334l5-1" stroke="#fff0dd" stroke-width="1.600" fill="none" filter="url(#soft1)"/><path d="m624 325 2-1m-4 10 3-1" stroke="#efaa7c" stroke-width="1.300"/>
      <path d="m498 416 200 17 40 115-174-22z" fill="#161b4a"/>
      <path d="m751 245 28 128-41 175-40-115z" fill="#1c2257"/>
      <path d="m424 592 30 1" stroke="#d22626"/><path d="m452 590 9 4-9 2z" fill="#f00000"/>
      <path d="m424 592-7-18" stroke="#2ac32a"/><path d="m414 567 5 5-4 4z" fill="#00d800"/>
      <path d="m424 592 7-23" stroke="#b7ae42"/><path d="m432 565 2 7-7-1z" fill="#8c8400"/>
      <g class="axis"><text x="418" y="572">Z</text><text x="431" y="570">Y</text><text x="454" y="594">X</text></g>
      <path d="M877 475h10v176h-10z" fill="url(#rampV)"/>
      <path d="M886 475.500h7M886 504.500h7M886 533.500h7M886 563.500h7M886 592.500h7M886 621.500h7M886 650.500h7" stroke="#eee"/>
      <g class="ticks"><text x="895" y="478">6.0e+10</text><text x="895" y="508">5e+10</text><text x="895" y="537">4e+10</text><text x="895" y="566">3e+10</text><text x="895" y="595">2e+10</text><text x="895" y="624">1e+10</text><text x="895" y="653">9.7e+01</text><text class="name" transform="translate(943 593) rotate(-90)">sum_velocity</text></g>
    </svg>
    <p class="lyric blue">All the things she said</p>
  </div>
</section>

<aside class="right">
  <h2 class="docktitle">Color Map Editor<span><svg><use href="#dock"/></svg><svg><use href="#x"/></svg></span></h2>
  <div class="form">
    <div class="searchrow"><input class="field" placeholder="Search ... (use Esc to clear text)" aria-label="Search color map"><button class="push sq" aria-label="Advanced"><svg><use href="#gear"/></svg></button><button class="push sq down" aria-label="Legend"><svg><use href="#cmap"/></svg></button><button class="push sq" aria-label="Edit legend"><svg><use href="#cme"/></svg></button></div>
    <p class="line">Array Name: sum_velocity</p>
    <div class="row two"><label for="mode">Automatic Rescale Range Mode</label><select id="mode" class="combo"><option>Grow and update on 'Apply'</option></select></div>
    <label class="check"><input type="checkbox">Interpret Values As Categories</label>
    <label class="check"><input type="checkbox">Rescale On Visibility Change</label>
    <h4>Mapping Data</h4>
    <div class="transfer">
      <svg class="chart" viewBox="960 205 217 113" preserveAspectRatio="none"><path d="M965 289 1172 209v80z" fill="url(#fade)"/><path d="M965 289 1172 209" stroke="#4c4c54" stroke-width="1.300"/><path d="M965 299h207v15H965z" fill="url(#ramp)"/>
        <g stroke="#666" stroke-width="1"><circle cx="965" cy="289" r="3.500" fill="#98a6e2"/><circle cx="1172" cy="209" r="3.500" fill="#df8492"/><circle cx="965" cy="306.500" r="3.500" fill="#7182d1"/><circle cx="1068.500" cy="306.500" r="3.500" fill="#dfe3d9"/><circle cx="1172" cy="306.500" r="3.500" fill="#cf4d61"/></g></svg>
      <div class="side"><button class="push" aria-label="Rescale"><svg><use href="#rng"/></svg></button><button class="push" aria-label="Rescale custom"><svg><use href="#rngc"/></svg></button><button class="push" aria-label="Rescale temporal"><svg><use href="#rngt"/></svg></button><button class="push" aria-label="Rescale visible"><svg><use href="#rngeye"/></svg></button><button class="push" aria-label="Invert"><svg><use href="#curve"/></svg></button><button class="push" aria-label="Presets"><svg><use href="#heart"/></svg></button><button class="push" aria-label="Save preset"><svg><use href="#openplus"/></svg></button><button class="push" aria-label="Advanced"><svg><use href="#gear"/></svg></button></div>
    </div>
    <div class="row data"><label for="data">Data:</label><input id="data" class="field" value="0"></div>
    <label class="check tall"><input type="checkbox">Use log scale when mapping data to colors</label>
    <label class="check tall"><input type="checkbox">Enable opacity mapping for surfaces</label>
    <label class="check tall off"><input type="checkbox" disabled>Use log scale when mapping data to opacity</label>
    <h4>Color Mapping Parameters</h4>
    <div class="row"><label for="space">Color Space</label><select id="space" class="combo"><option>Diverging</option></select></div>
    <button class="push nan"><i></i>Nan Color</button>
    <div class="row"><label for="nano">Nan Opacity</label><span class="slide"><input id="nano" type="range" value="100"><input class="field" value="1" aria-label="Nan opacity value"></span></div>
    <h4>Color Discretization</h4>
    <label class="check"><input type="checkbox" checked>Discretize</label>
    <div class="row two table"><label for="ntab">Number Of Table Values</label><span class="slide"><input id="ntab" type="range" value="26"><input class="field" value="256" aria-label="Table values"></span></div>
    <div class="foot"><button class="push" aria-label="Restore"><svg><use href="#refresh"/></svg></button><button class="push" aria-label="Save as default for array"><svg><use href="#openplus"/></svg></button><button class="push" aria-label="Save as default"><svg><use href="#openplus"/></svg></button><button class="push render" disabled><svg><use href="#apply"/></svg>Render Views</button><button class="push down" aria-label="Auto render"><svg><use href="#extract"/></svg></button></div>
  </div>
  <p class="lyric white">All the things she said</p>
</aside>
</main>
<footer class="status"><button class="push" aria-label="Abort"><svg><use href="#x"/></svg></button><div></div></footer>
</div>
</body>
</html>
```

FILE: styles.css
```css
*, *::before, *::after { box-sizing: border-box; }
body { margin: 0; background: #f0f0f0; color: #111; font: 9px/10px "Liberation Serif", serif; }
button, input, select { font: inherit; color: inherit; margin: 0; padding: 0; border: 0; border-radius: 0; background: none; }
button { display: flex; align-items: center; justify-content: center; white-space: nowrap; }
h1, h2, h3, h4, p, ul { margin: 0; padding: 0; font-size: inherit; font-weight: normal; }
svg { display: block; }
.defs { position: absolute; width: 0; height: 0; }
.mini { font: 7px "Open Sans", sans-serif; fill: #444; stroke: none; }
.vcr { fill: #a5d58d; stroke: #6a9a55; stroke-width: 1px; }
.edge { stroke: #686351; stroke-width: 0.5; }

.window { display: flex; flex-direction: column; height: 100vh; overflow: hidden; border-top: 1px solid #777; border-left: 1px solid #2a2a2a; padding-left: 4px; background: linear-gradient(90deg, #b4b4b4 3px, #f0f0f0 4px); }

.titlebar { display: flex; align-items: center; height: 18px; padding-left: 5px; background: #fff; font: 8px/12px "Open Sans", sans-serif; flex: none; }
.logo { width: 9px; height: 7px; margin-right: 4px; }
.winctl { display: flex; gap: 19px; margin: 0 5px 0 auto; }
.winctl svg { width: 9px; height: 9px; }
.menubar { display: flex; gap: 7px; height: 14px; padding-left: 3px; font: 8px/12px "Open Sans", sans-serif; flex: none; border-bottom: 1px solid #b4b4b4; }

.toolbar { display: flex; height: 21px; padding-left: 2px; border-bottom: 1px solid #bbb; box-shadow: inset 0 1px #fafafa; flex: none; }
.group { display: flex; align-items: center; padding-right: 2px; border-right: 1px solid #bbb; margin-right: 1px; }
.group:last-child { border-right: 0; }
.group::before { content: ""; width: 3px; height: 16px; margin-right: 3px; border-left: 1px solid #b5b5b5; border-right: 1px solid #b5b5b5; background: #fff; }
.group button { width: 19px; height: 18px; }
.group button svg { width: 15px; height: 15px; overflow: visible; }
.group button.on { background: #fafafa; box-shadow: inset 1px 1px #c4c4c4; }
.sep { width: 4px; height: 16px; border-right: 1px solid #fff; background: linear-gradient(90deg, transparent 2px, #b8b8b8 2px); }
.xp { --v: #8fc577; --h: #e0a52c; --c: #dc4a30; }
.xm { --v: #8fc577; --h: #e0a52c; --c: #dc4a30; }
.yp { --v: #8fc577; --h: #d95d46; --c: #edb534; }
.ym { --v: #8fc577; --h: #d95d46; --c: #edb534; }
.zp { --v: #e9ab2b; --h: #d95d46; --c: #8fc577; }
.zm { --v: #e9ab2b; --h: #d95d46; --c: #8fc577; }
.timelabel { width: 20px; font-size: 8px; }
.time, .spin { height: 12px; padding-left: 2px; background: #fff; border: 1px solid #777; border-right-color: #ddd; border-bottom-color: #ddd; }
.time { width: 67px; }
.spin { width: 13px; margin-left: 2px; background: #eee; color: #888; }
.spinner { width: 10px; margin-right: 1px; }
.spinner i { display: block; height: 6px; border: 1px solid #777; border-left-color: #fff; border-top-color: #fff; background: linear-gradient(#333, #333) center / 4px 1px no-repeat; }

.combo { appearance: none; min-width: 0; height: 13px; padding-left: 2px; border: 1px solid #747474; border-right-color: #ccc; border-bottom-color: #ccc; line-height: 10px; font-size: 9px;
  background: url("data:image/svg+xml,%3Csvg xmlns='http://www.w3.org/2000/svg' width='10' height='11'%3E%3Cpath d='M0 0h10v11H0z' fill='%23777'/%3E%3Cpath d='M0 0h9v10H0z' fill='%23f0f0f0'/%3E%3Cpath d='M2 4h5L4.500 7z'/%3E%3C/svg%3E") right center no-repeat #fff; }
.combo.array { padding-left: 12px; background: url("data:image/svg+xml,%3Csvg xmlns='http://www.w3.org/2000/svg' width='10' height='11'%3E%3Cpath d='M0 0h10v11H0z' fill='%23777'/%3E%3Cpath d='M0 0h9v10H0z' fill='%23f0f0f0'/%3E%3Cpath d='M2 4h5L4.500 7z'/%3E%3C/svg%3E") right center no-repeat, url("data:image/svg+xml,%3Csvg xmlns='http://www.w3.org/2000/svg' width='7' height='7'%3E%3Cpath d='M3.500 1 6 3.500 3.500 6 1 3.500z' fill='%23fff' stroke='%23a0520f'/%3E%3C/svg%3E") 4px center no-repeat #fff; }
.combo:disabled { background-color: #eee; opacity: .8; }
.w-array { width: 100px; margin: 0 5px 0 2px; }
.w-comp { width: 45px; }
.w-repr { width: 92px; }

.work { display: grid; grid-template-columns: 344px 1fr 240px; flex: 1; min-height: 0; border-top: 2px solid #c8c8c8; }
.docktitle { display: flex; align-items: center; height: 12px; font: 8px/12px "Open Sans", sans-serif; flex: none; }
.docktitle span { display: flex; gap: 5px; margin-left: auto; }
.docktitle svg { width: 7px; height: 7px; }

.left { display: flex; flex-direction: column; min-height: 0; padding-right: 1px; border-left: 1px solid #fff; }
.tree { position: relative; display: grid; grid-auto-rows: 1fr; height: 189px; padding: 1px 0 24px; list-style: none; background: #fff; border-top: 1px solid #888; border-left: 1px solid #888; font-size: 8px; }
.tree::before { content: ""; position: absolute; left: 21px; top: 2px; height: 143px; border-left: 1px solid #999; }
.tree li { display: grid; grid-template-columns: 16px 10px 12px auto; justify-content: start; align-items: center; }
.tree .eye { width: 9px; height: 9px; margin-left: 1px; }
.tree .ico { grid-column: 3; width: 11px; height: 11px; position: relative; }
.tree b { width: 7px; height: 7px; margin-left: 2px; border: 1px solid #aaa; background: linear-gradient(#333, #333) center / 3px 1px no-repeat #fff; position: relative; }
.tree span { line-height: 11px; }
.tree .root { grid-template-columns: 17px 10px auto; }
.tree .root .ico { grid-column: 2; width: 9px; background: #fff; }
.tree .sel span { background: #0878d7; color: #fff; padding-right: 4px; }
.tabs { display: flex; height: 14px; margin-top: 2px; font-size: 9px; }
.tabs button { padding: 0 8px 0 6px; border-right: 1px solid #777; }
.tabs button + button { padding: 0 5px 0 7px; }
.push { background: #f0f0f0; border: 1px solid; border-color: #fff #777 #777 #fff; box-shadow: inset -1px -1px #bbb; }
.push svg { width: 11px; height: 11px; }
.push:disabled { color: #888; }
.push.down { background: #f8f8f8; border-color: #777 #fff #fff #777; box-shadow: inset 1px 1px #ccc; }
.actions { display: grid; grid-template-columns: repeat(4, 1fr); gap: 1px; height: 18px; margin: 4px 2px 3px 4px; flex: none; }
.actions .push { gap: 3px; height: 18px; }
.actions .push svg { width: 9px; height: 9px; }
.actions .help { color: #1a78b4; font: bold 10px "Open Sans", sans-serif; }
.searchrow { display: flex; gap: 2px; align-items: center; height: 14px; flex: none; }
.left .searchrow { margin: 0 2px 3px 4px; }
.field { min-width: 0; width: 100%; height: 12px; padding-left: 2px; background: #fff; border: 1px solid #777; border-width: 2px 1px 1px 2px; border-color: #888 #e4e4e4 #e4e4e4 #888; }
.field::placeholder { color: #888; opacity: 1; }
.searchrow .field { flex: 1; height: 13px; }
.sq { width: 14px; height: 14px; flex: none; }
.sq svg { width: 11px; height: 11px; }
.sq.on { border: 1px solid; border-color: #888 #fff #fff #888; }
.scroll { display: grid; grid-template-columns: 1fr 11px; height: 287px; margin: 0 1px 0 4px; overflow: hidden; }
.form { display: flex; flex-direction: column; gap: 3px; min-width: 0; }
.scroll .form { height: 287px; overflow: hidden; padding-right: 1px; }
.form > * { flex: none; }
.bar { display: flex; flex-direction: column; background: #f8f8f8; }
.bar i { display: block; height: 10px; background: #f0f0f0; border: 1px solid; border-color: #fff #777 #777 #fff; position: relative; }
.bar .thumb { height: 67px; }
.bar .dn { margin-top: auto; }
.bar .up::after, .bar .dn::after { content: ""; position: absolute; left: 2px; top: 2px; border: 3px solid transparent; border-top: 3px solid #111; border-bottom: 0; }
.bar .up::after { transform: rotate(180deg); }
.hdr { display: flex; gap: 3px; height: 19px; }
.hdr h3 { display: flex; align-items: center; flex: 1; margin-right: 2px; padding-left: 6px; font-weight: bold; font-size: 9px; border: 1px solid; border-color: #999 #fff #fff #999; white-space: nowrap; }
.hdr h3 i { width: 9px; height: 4px; margin-right: 4px; background: #6079c0; border: 1px solid #39549b; }
.hdr .push, .editrow .push { width: 18px; height: 100%; }
.row { display: grid; grid-template-columns: 66px 1fr; align-items: center; height: 12px; }
.row label { font-size: 8px; line-height: 8px; padding-bottom: 3px; white-space: nowrap; }
.form .combo { height: 13px; width: 100%; }
.check { display: flex; align-items: center; gap: 3px; height: 11px; }
.right .check { height: 10px; gap: 4px; }
.right .tall { height: 12px; }
.right .off { color: #888; }
.check input { appearance: none; width: 8px; height: 8px; background: #fff; border: 1px solid; border-color: #777 #e4e4e4 #e4e4e4 #777; }
.check input:checked { background: url("data:image/svg+xml,%3Csvg xmlns='http://www.w3.org/2000/svg' width='6' height='6'%3E%3Cpath d='m.5 2.500 2 2 3-3.500' fill='none' stroke='%23000' stroke-width='1.500'/%3E%3C/svg%3E") center no-repeat #fff; }
h4 { height: 11px; margin-bottom: 1px; border-bottom: 1px solid #aaa; font-weight: bold; font-size: 9px; line-height: 11px; }
.pair { display: grid; grid-template-columns: 150px 149px; gap: 4px; height: 13px; }
.editrow { display: flex; gap: 3px; height: 17px; }
.editrow .edit { flex: 1; gap: 2px; }
.slide { display: grid; grid-template-columns: 128px 1fr; gap: 3px; align-items: center; }
.right .slide { grid-template-columns: 81px 1fr; }
input[type="range"] { appearance: none; min-width: 0; width: 100%; height: 11px; background: linear-gradient(#888, #888) center / 100% 1px no-repeat; }
input[type="range"]::-webkit-slider-thumb { appearance: none; width: 7px; height: 11px; background: #f0f0f0; border: 1px solid; border-color: #fff #777 #777 #fff; }

.center { display: flex; flex-direction: column; min-width: 0; margin-left: 1px; padding-left: 5px; border-left: 1px solid #fff; }
.layouttabs { display: flex; height: 13px; padding-left: 5px; flex: none; }
.layouttabs button { gap: 3px; padding-right: 7px; border-right: 1px solid #888; font-size: 8px; }
.layouttabs .plus { padding: 0 5px 0 8px; }
.layouttabs svg { width: 10px; height: 10px; }
.viewbar { display: flex; align-items: center; height: 13px; flex: none; }
.viewbar > button { width: 12px; height: 12px; }
.viewbar > button svg { width: 9px; height: 9px; }
.viewbar > i { width: 3px; height: 9px; background: linear-gradient(90deg, transparent 1px, #aaa 1px, #aaa 2px, transparent 2px); }
.viewbar .d3 { font: 7px "Open Sans", sans-serif; }
.g { --c: #62ad4e; } .r { --c: #dc7767; } .m { --c: #9a6b48; } .n { --c: #c4c4c4; }
.viewbar strong { margin-left: auto; margin-right: 7px; font-size: 9px; text-decoration: underline; }
.viewctl { display: flex; }
.viewctl .push { width: 12px; height: 12px; }
.viewctl svg { width: 8px; height: 8px; }
.view { position: relative; flex: 1; min-height: 0; background: #52576e; border: 2px solid #1414e8; outline: 1px solid #8b8b7c; box-shadow: inset 0 0 0 1px #8186b5; }
.view > svg { width: 100%; height: 100%; }
.axis { font: 11px "Open Sans", sans-serif; fill: #fff; }
.ticks { font: 10px Lato, sans-serif; fill: #f1f1f1; }
.ticks .name { font-size: 11px; }
.lyric { position: absolute; font: 12px/16px "Open Sans", sans-serif; white-space: nowrap; }
.blue { right: 10px; bottom: 26px; color: #2c9af2; text-shadow: 1px 1px 1px #071c38, -1px -1px 1px #123; }
.white { right: 36px; bottom: 12px; color: #fff; text-shadow: 1px 0 1px #333, -1px 0 1px #333, 0 1px 1px #333, 0 -1px 1px #333; }

.right { position: relative; min-width: 0; padding-left: 4px; overflow: hidden; }
.right .docktitle { margin-bottom: 4px; }
.right .form { padding: 0 1px 0 4px; }
.line { height: 10px; font-size: 8px; }
.right .row.two { height: 16px; }
.right .row.table { height: 18px; }
.right .row.two label { white-space: normal; padding: 0; }
.transfer { display: grid; grid-template-columns: 1fr 14px; height: 113px; margin-top: 1px; }
.chart { width: 100%; height: 113px; background: #fff; overflow: visible; }
.side { display: grid; grid-template-rows: repeat(8, 1fr); }
.right .data { grid-template-columns: 22px 1fr; height: 13px; }
.right .data label { padding: 0; }
.nan { justify-content: flex-start; gap: 1px; height: 13px; padding-left: 2px; font-size: 8px; }
.nan i { width: 9px; height: 9px; border: 1px solid #555; border-radius: 50%; background: #ff0; }
.foot { display: flex; gap: 2px; height: 16px; }
.foot .push { width: 18px; }
.foot .render { width: 64px; margin-left: auto; gap: 2px; }

.status { display: flex; align-items: flex-end; height: 12px; flex: none; padding-left: 590px; }
.status .push { width: 12px; height: 9px; margin-right: 2px; }
.status .push svg { width: 7px; height: 7px; opacity: .4; }
.status div { flex: 1; height: 8px; margin-right: 7px; border-top: 1px solid #999; border-left: 1px solid #999; border-right: 1px solid #fff; }
```
